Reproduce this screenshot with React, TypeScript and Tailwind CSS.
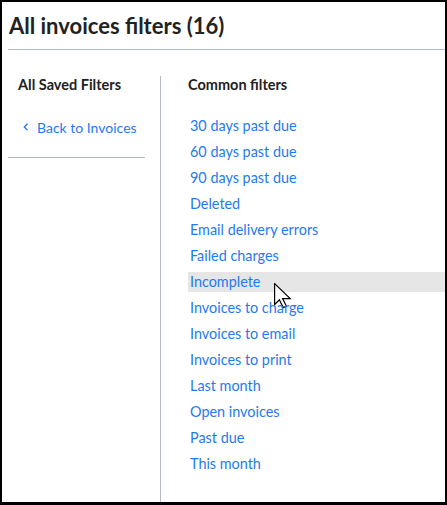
import React from "react";

const filters = [
  "30 days past due",
  "60 days past due",
  "90 days past due",
  "Deleted",
  "Email delivery errors",
  "Failed charges",
  "Incomplete",
  "Invoices to charge",
  "Invoices to email",
  "Invoices to print",
  "Last month",
  "Open invoices",
  "Past due",
  "This month",
];

const Cursor = () => (
  <svg
    width="19"
    height="26"
    viewBox="0 0 19 26"
    className="absolute left-[86px] top-[11px] pointer-events-none"
  >
    <path
      d="M0.6 0.6 L0.6 21.5 L5.4 16.8 L9.2 24.6 L12.4 23.2 L8.6 15.6 L16.2 15.6 Z"
      fill="#fff"
      stroke="#000"
      strokeWidth="1.2"
      strokeLinejoin="miter"
    />
  </svg>
);

const App = () => {
  return (
    <div className="w-[447px] h-[505px] bg-white border-t-2 border-l-2 border-r-2 border-b-[3px] border-black flex flex-col font-['Lato','Open_Sans',sans-serif] overflow-hidden">
      {/* Header */}
      <header className="ml-[6px] h-[48px] shrink-0 border-b border-[#b5bcc4] flex items-center">
        <h1 className="pl-px text-[22px] font-bold text-[#222] leading-none">
          All invoices filters (16)
        </h1>
      </header>

      {/* Body */}
      <div className="flex flex-1 pt-[26px]">
        {/* Saved filters */}
        <aside className="ml-[6px] w-[137px] shrink-0 flex flex-col">
          <h2 className="pl-[10px] h-[18px] leading-[18px] text-[14.5px] font-bold text-[#222]">
            All Saved Filters
          </h2>
          <a className="mt-[23px] h-[20px] pl-[15px] flex items-center gap-[8px] text-[14px] text-[#1f7af2] cursor-pointer">
            <svg width="6" height="8" viewBox="0 0 6 8">
              <path d="M4.5 0.8 L1.3 4 L4.5 7.2" fill="none" stroke="#1f7af2" strokeWidth="1.3" />
            </svg>
            Back to Invoices
          </a>
          <div className="mt-[20px] border-t border-[#b5bcc4]" />
        </aside>

        {/* Common filters */}
        <section className="ml-[15px] flex-1 border-l border-[#b5bcc4] pl-[27px]">
          <h2 className="h-[18px] leading-[18px] text-[14.5px] font-bold text-[#222]">
            Common filters
          </h2>
          <ul className="mt-[22px] flex flex-col gap-[6px]">
            {filters.map((f) => (
              <li
                key={f}
                className={
                  f === "Incomplete"
                    ? "relative h-[20px] leading-[20px] px-[2px] text-[14.4px] text-[#1f7af2] bg-[#e6e6e6]"
                    : "relative h-[20px] leading-[20px] px-[2px] text-[14.4px] text-[#1f7af2]"
                }
              >
                {f}
                {f === "Incomplete" && <Cursor />}
              </li>
            ))}
          </ul>
        </section>
      </div>
    </div>
  );
};

export default App;
